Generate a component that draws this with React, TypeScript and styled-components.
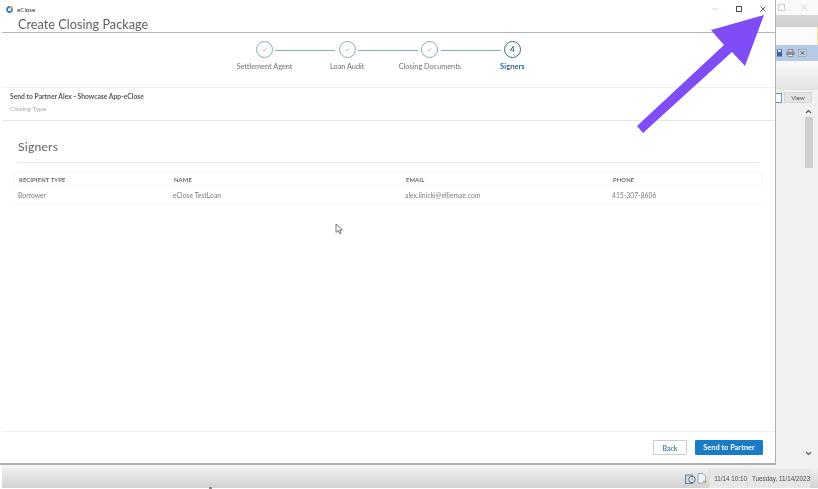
import React from "react";
import styled, { createGlobalStyle } from "styled-components";

const GlobalStyle = createGlobalStyle`
  html, body {
    margin: 0;
    padding: 0;
    background: #fff;
    overflow: hidden;
  }
  body {
    font-family: Lato, "Liberation Sans", sans-serif;
  }
`;

const Page = styled.div`
  position: relative;
  width: 818px;
  height: 489px;
  display: flex;
  flex-direction: column;
  overflow: hidden;
  background: #fff;
  filter: blur(0.4px);
`;

const Desktop = styled.div`
  display: flex;
  height: 465px;
  flex: none;
`;

const Dialog = styled.div`
  width: 776px;
  flex: none;
  box-sizing: border-box;
  display: flex;
  flex-direction: column;
  background: #fff;
  border-right: 1px solid #b0b0b0;
  border-bottom: 2px solid #b0b0b0;
  padding-left: 2px;
`;

const TitleBar = styled.div`
  height: 17px;
  display: flex;
  align-items: center;
  padding: 1px 4px 0 4px;
  flex: none;
  box-sizing: border-box;
`;

const AppName = styled.span`
  font-size: 6.2px;
  color: #333;
  margin-left: 4px;
`;

const WindowButtons = styled.div`
  margin-left: auto;
  display: flex;
  align-items: center;
  gap: 18px;
  padding-right: 5px;
`;

const Heading = styled.div`
  height: 16px;
  flex: none;
  box-sizing: border-box;
  padding-left: 16px;
  font-size: 12.6px;
  line-height: 16px;
  letter-spacing: 0.05px;
  color: #5c5f62;
  border-bottom: 1px solid #b5b7b9;
`;

const Stepper = styled.div`
  height: 55px;
  flex: none;
  box-sizing: border-box;
  display: flex;
  justify-content: center;
  padding: 8px 0 0 0;
  border-bottom: 1px solid #f1f1f1;
`;

const Step = styled.div`
  position: relative;
  width: 82.6px;
  display: flex;
  flex-direction: column;
  align-items: center;
  gap: 4px;
`;

const Connector = styled.span`
  position: absolute;
  top: 8.5px;
  left: 52px;
  width: 60px;
  height: 1px;
  background: #7eb0c9;
`;

const Circle = styled.div<{ $active?: boolean }>`
  width: 17px;
  height: 17px;
  box-sizing: border-box;
  border-radius: 50%;
  border: 1px solid ${(p) => (p.$active ? "#2c6f97" : "#8aa9ba")};
  display: flex;
  align-items: center;
  justify-content: center;
  font-size: 7.5px;
  font-weight: 700;
  color: #2c6688;
`;

const StepLabel = styled.div<{ $active?: boolean }>`
  font-size: ${(p) => (p.$active ? "7.6px" : "7.3px")};
  line-height: 9px;
  white-space: nowrap;
  color: ${(p) => (p.$active ? "#2f6b8f" : "#6f7376")};
  font-weight: ${(p) => (p.$active ? 700 : 400)};
`;

const Summary = styled.div`
  height: 33px;
  flex: none;
  box-sizing: border-box;
  padding: 4px 0 0 8px;
  border-bottom: 1px solid #e6e6e6;
`;

const SummaryTitle = styled.div`
  font-size: 6.75px;
  line-height: 9px;
  font-weight: 700;
  color: #55585b;
`;

const SummarySub = styled.div`
  font-size: 6.5px;
  line-height: 9px;
  margin-top: 3px;
  color: #a9abad;
`;

const Content = styled.div`
  flex: 1;
  padding: 18px 13px 0 12px;
`;

const SectionTitle = styled.div`
  margin-left: 4px;
  padding-bottom: 8px;
  font-size: 12.2px;
  line-height: 15px;
  letter-spacing: 0.2px;
  color: #606366;
  border-bottom: 1px solid #e9e9e9;
  margin-right: 3px;
`;

const Table = styled.div`
  margin-top: 9px;
`;

const Row = styled.div<{ $head?: boolean }>`
  display: grid;
  grid-template-columns: 155px 232px 207px 1fr;
  height: ${(p) => (p.$head ? "14px" : "19px")};
  box-sizing: border-box;
  align-items: center;
  font-size: ${(p) => (p.$head ? "5.8px" : "6.6px")};
  font-weight: ${(p) => (p.$head ? 700 : 400)};
  letter-spacing: ${(p) => (p.$head ? "0.15px" : "0.1px")};
  color: ${(p) => (p.$head ? "#65686b" : "#77797c")};
  border: 1px solid #f6f6f6;
  border-width: ${(p) => (p.$head ? "1px" : "0 0 1px 0")};
`;

const Cell = styled.div`
  padding-left: 4px;
`;

const Footer = styled.div`
  height: 32px;
  flex: none;
  box-sizing: border-box;
  display: flex;
  justify-content: flex-end;
  align-items: flex-start;
  gap: 8px;
  padding: 8px 12px 0 0;
  border-top: 1px solid #efefef;
`;

const Button = styled.button<{ $primary?: boolean }>`
  height: 15px;
  box-sizing: border-box;
  padding: 0;
  width: ${(p) => (p.$primary ? "68px" : "34px")};
  font-family: inherit;
  font-size: ${(p) => (p.$primary ? "7.4px" : "7px")};
  font-weight: 700;
  border-radius: 1px;
  border: 1px solid ${(p) => (p.$primary ? "#1a7cc4" : "#c7ced3")};
  background: ${(p) => (p.$primary ? "#1a7cc4" : "#fff")};
  color: ${(p) => (p.$primary ? "#fff" : "#4f86ad")};
`;

const SidePanel = styled.div`
  flex: 1;
  display: flex;
  flex-direction: column;
  background: #f1f1f1;
  min-width: 0;
`;

const SideTitle = styled.div`
  height: 15px;
  flex: none;
  background: #fafafa;
  display: flex;
  align-items: center;
  justify-content: space-between;
  padding: 0 10px 0 2px;
`;

const SideGrey = styled.div`
  height: 12px;
  flex: none;
  background: linear-gradient(#d6d6d6, #cfcfcf);
`;

const SideWhite = styled.div`
  height: 18px;
  flex: none;
  background: #fbfbfb;
  border-right: 1px solid #f2e2a0;
`;

const BlueBar = styled.div`
  height: 16px;
  flex: none;
  background: #b4cae6;
  display: flex;
  align-items: center;
  gap: 3px;
  padding-left: 1px;
`;

const SideShade = styled.div`
  height: 29px;
  flex: none;
  background: linear-gradient(#fafafa, #e2e2e2);
`;

const ViewRow = styled.div`
  height: 15px;
  flex: none;
  display: flex;
  align-items: center;
  gap: 2px;
  background: #f0f0f0;
`;

const BlueBox = styled.div`
  width: 6px;
  height: 10px;
  box-sizing: border-box;
  background: #fff;
  border: 1px solid #5a95d0;
  border-left: none;
`;

const ViewButton = styled.div`
  width: 28px;
  height: 11px;
  text-align: center;
  font-size: 6px;
  line-height: 9px;
  color: #555;
  background: #e4e4e4;
  border: 1px solid #d8d8d8;
  box-sizing: border-box;
`;

const ScrollArea = styled.div`
  flex: 1;
  display: flex;
  justify-content: flex-end;
  min-height: 0;
`;

const ScrollTrack = styled.div`
  width: 9px;
  margin-right: 5px;
  display: flex;
  flex-direction: column;
  align-items: center;
  padding: 4px 0 9px;
  box-sizing: border-box;
`;

const ScrollThumb = styled.div`
  width: 8px;
  height: 51px;
  margin-top: 3px;
  background: #cfcfcf;
`;

const ScrollArrowDown = styled.div`
  margin-top: auto;
  line-height: 0;
`;

const StatusBar = styled.div`
  height: 23px;
  flex: none;
  margin-left: 2px;
  box-sizing: border-box;
  border-top: 3px solid #f4f4f4;
  background: linear-gradient(#efefef, #d2d2d2);
  display: flex;
  align-items: center;
  justify-content: flex-end;
  padding: 0 8px 0 0;
`;

const StatusIcons = styled.div`
  display: flex;
  align-items: center;
  gap: 1px;
  margin-right: 2px;
`;

const StatusText = styled.div`
  font-family: "Liberation Sans", sans-serif;
  font-size: 6.3px;
  line-height: 19px;
  padding: 0 0 0 4px;
  color: #4a4d55;
  border-left: 1px solid #dcdcdc;
  background: #e6e6e6;
`;

const ArrowOverlay = styled.svg`
  position: absolute;
  left: 630px;
  top: 10px;
`;

const CursorOverlay = styled.svg`
  position: absolute;
  left: 335px;
  top: 223px;
`;

const BottomTick = styled.span`
  position: absolute;
  left: 209px;
  top: 487px;
  width: 3px;
  height: 2px;
  background: #8a8a8a;
`;

const LogoIcon = () => (
  <svg width="7" height="7" viewBox="0 0 14 14">
    <circle cx="7" cy="7" r="5" fill="none" stroke="#2f80c8" strokeWidth="3.6" />
    <path d="M7 2a5 5 0 0 1 5 5" fill="none" stroke="#e8a33a" strokeWidth="3.6" />
  </svg>
);

const Check = () => (
  <svg width="7" height="7" viewBox="0 0 10 10">
    <path d="M2.5 5.5l1.6 1.6 3.6-3.8" fill="none" stroke="#8d9498" strokeWidth="0.9" />
  </svg>
);

const steps = ["Settlement Agent", "Loan Audit", "Closing Documents", "Signers"];

const App: React.FC = () => {
  return (
    <Page>
      <GlobalStyle />
      <Desktop>
        <Dialog>
          <TitleBar>
            <LogoIcon />
            <AppName>eClose</AppName>
            <WindowButtons>
              <svg width="6" height="6" viewBox="0 0 6 6">
                <path d="M0 3h6" stroke="#c9c9c9" strokeWidth="0.8" />
              </svg>
              <svg width="6" height="6" viewBox="0 0 6 6">
                <rect x="0.5" y="0.5" width="5" height="5" fill="none" stroke="#4c4c4c" strokeWidth="1" />
              </svg>
              <svg width="6" height="6" viewBox="0 0 6 6">
                <path d="M0.5 0.5l5 5M5.5 0.5l-5 5" stroke="#4c4c4c" strokeWidth="0.9" />
              </svg>
            </WindowButtons>
          </TitleBar>
          <Heading>Create Closing Package</Heading>
          <Stepper>
            {steps.map((label, i) => (
              <Step key={label}>
                <Circle $active={i === 3}>{i === 3 ? "4" : <Check />}</Circle>
                <StepLabel $active={i === 3}>{label}</StepLabel>
                {i < 3 && <Connector />}
              </Step>
            ))}
          </Stepper>
          <Summary>
            <SummaryTitle>Send to Partner Alex - Showcase App-eClose</SummaryTitle>
            <SummarySub>Closing Type</SummarySub>
          </Summary>
          <Content>
            <SectionTitle>Signers</SectionTitle>
            <Table>
              <Row $head>
                <Cell>RECIPIENT TYPE</Cell>
                <Cell>NAME</Cell>
                <Cell>EMAIL</Cell>
                <Cell>PHONE</Cell>
              </Row>
              <Row>
                <Cell>Borrower</Cell>
                <Cell>eClose TestLoan</Cell>
                <Cell>alex.ilnicki@elliemae.com</Cell>
                <Cell>415-307-8606</Cell>
              </Row>
            </Table>
          </Content>
          <Footer>
            <Button>Back</Button>
            <Button $primary>Send to Partner</Button>
          </Footer>
        </Dialog>
        <SidePanel>
          <SideTitle>
            <svg width="7" height="7" viewBox="0 0 7 7">
              <rect x="0.5" y="0.5" width="6" height="6" fill="none" stroke="#cfcfcf" />
            </svg>
            <svg width="7" height="7" viewBox="0 0 7 7">
              <path d="M0.5 0.5l6 6M6.5 0.5l-6 6" stroke="#cfcfcf" strokeWidth="0.9" />
            </svg>
          </SideTitle>
          <SideGrey />
          <SideWhite />
          <BlueBar>
            <svg width="6" height="8" viewBox="0 0 6 8">
              <rect width="5" height="7" y="0.5" fill="#3f5f95" />
              <rect x="1" y="1" width="3" height="2" fill="#dfe8f4" />
            </svg>
            <svg width="9" height="8" viewBox="0 0 11 9">
              <rect x="2.5" y="0.5" width="6" height="3" fill="#d8d8d8" stroke="#555" strokeWidth="0.7" />
              <rect x="0.5" y="3" width="10" height="4" fill="#8d9096" />
              <rect x="2.5" y="6" width="6" height="2.5" fill="#eee" stroke="#555" strokeWidth="0.6" />
            </svg>
            <svg width="9" height="8" viewBox="0 0 10 9">
              <rect x="0.5" y="0.5" width="9" height="8" fill="#c7d3e2" stroke="#8e98a6" strokeWidth="0.7" />
              <path d="M3 2.5l4 4M7 2.5l-4 4" stroke="#444" strokeWidth="1.1" />
            </svg>
          </BlueBar>
          <SideShade />
          <ViewRow>
            <BlueBox />
            <ViewButton>View</ViewButton>
          </ViewRow>
          <ScrollArea>
            <ScrollTrack>
              <svg width="7" height="5" viewBox="0 0 7 5">
                <path d="M1 4l2.5-2.5L6 4" fill="none" stroke="#555" strokeWidth="1.1" />
              </svg>
              <ScrollThumb />
              <ScrollArrowDown>
                <svg width="7" height="5" viewBox="0 0 7 5">
                  <path d="M1 1l2.5 2.5L6 1" fill="none" stroke="#555" strokeWidth="1.1" />
                </svg>
              </ScrollArrowDown>
            </ScrollTrack>
          </ScrollArea>
        </SidePanel>
      </Desktop>
      <StatusBar>
        <StatusIcons>
          <svg width="11" height="11" viewBox="0 0 11 11">
            <rect x="0.5" y="2" width="7" height="8.5" fill="#cfdbe6" stroke="#4e6a80" strokeWidth="0.8" />
            <circle cx="7" cy="6.5" r="3.2" fill="#eef3f7" stroke="#3e5c74" strokeWidth="0.9" />
            <path d="M7 4.8v1.8l1.2.8" fill="none" stroke="#3e5c74" strokeWidth="0.7" />
          </svg>
          <svg width="10" height="11" viewBox="0 0 10 11">
            <path d="M1 .5h5l2.5 2.5v7H1z" fill="#eef4fa" stroke="#7f9db8" strokeWidth="0.8" />
            <path d="M6 8.5h3.5" stroke="#d9a53c" strokeWidth="1.4" />
          </svg>
        </StatusIcons>
        <StatusText>11/14 10:10</StatusText>
        <StatusText>Tuesday, 11/14/2023</StatusText>
      </StatusBar>
      <CursorOverlay width="9" height="12" viewBox="0 0 9 12">
        <path d="M1 1v8.5l2.2-2 1.5 3.3 1.4-.6-1.5-3.2h3z" fill="#fff" stroke="#555" strokeWidth="0.8" />
      </CursorOverlay>
      <ArrowOverlay width="150" height="130" viewBox="0 0 150 130">
        <path d="M7 116 L94 35 L81 20 L134 5 L115 56 L102 42 L13 123 Z" fill="#7f4cf6" />
      </ArrowOverlay>
      <BottomTick />
    </Page>
  );
};

export default App;
